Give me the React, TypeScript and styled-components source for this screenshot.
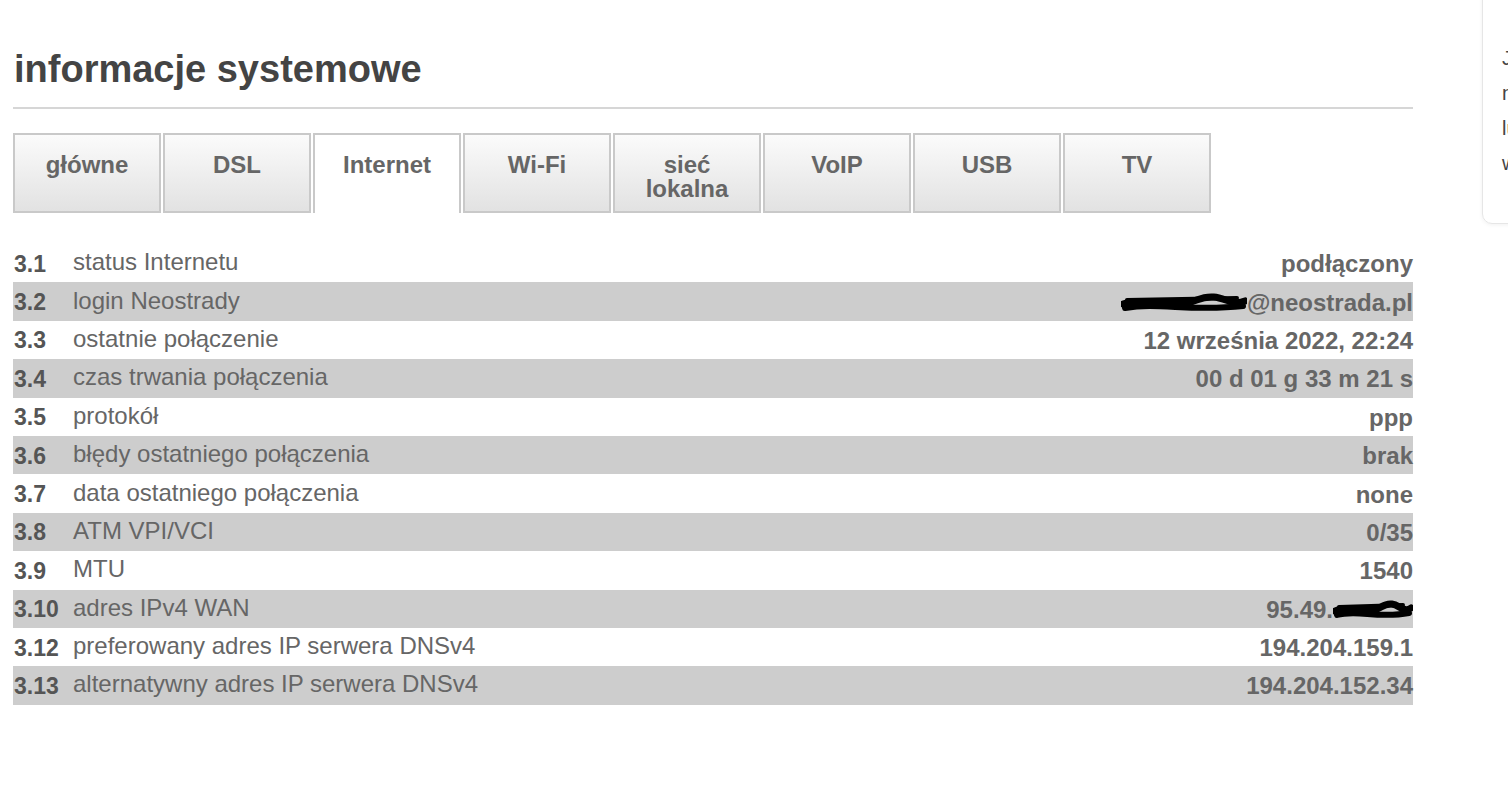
import React from 'react';
import styled, { createGlobalStyle } from 'styled-components';

const GlobalStyle = createGlobalStyle`
  html, body {
    margin: 0;
    padding: 0;
    background: #fff;
    overflow: hidden;
  }

  body {
    font-family: 'Liberation Sans', Arial, Helvetica, sans-serif;
  }
`;

type Row = {
  id: string;
  label: string;
  value: React.ReactNode;
};

const Scribble = ({ width }: { width: number }) => (
  <ScribbleSvg width={width} height={22} viewBox={`0 0 ${width} 22`}>
    <path
      d={`M2 12 C ${width * 0.2} 4, ${width * 0.4} 18, ${width * 0.6} 8 S ${width * 0.85} 16, ${width - 2} 9`}
      stroke="#000"
      strokeWidth={7}
      fill="none"
      strokeLinecap="round"
    />
    <path
      d={`M4 16 C ${width * 0.3} 10, ${width * 0.55} 20, ${width - 4} 14`}
      stroke="#000"
      strokeWidth={6}
      fill="none"
      strokeLinecap="round"
    />
    <path
      d={`M6 8 L ${width - 10} 6`}
      stroke="#000"
      strokeWidth={4}
      fill="none"
      strokeLinecap="round"
    />
  </ScribbleSvg>
);

const tabs = ['główne', 'DSL', 'Internet', 'Wi-Fi', 'sieć lokalna', 'VoIP', 'USB', 'TV'];

const rows: Row[] = [
  { id: '3.1', label: 'status Internetu', value: 'podłączony' },
  {
    id: '3.2',
    label: 'login Neostrady',
    value: (
      <>
        <Scribble width={126} />
        @neostrada.pl
      </>
    ),
  },
  { id: '3.3', label: 'ostatnie połączenie', value: '12 września 2022, 22:24' },
  { id: '3.4', label: 'czas trwania połączenia', value: '00 d 01 g 33 m 21 s' },
  { id: '3.5', label: 'protokół', value: 'ppp' },
  { id: '3.6', label: 'błędy ostatniego połączenia', value: 'brak' },
  { id: '3.7', label: 'data ostatniego połączenia', value: 'none' },
  { id: '3.8', label: 'ATM VPI/VCI', value: '0/35' },
  { id: '3.9', label: 'MTU', value: '1540' },
  {
    id: '3.10',
    label: 'adres IPv4 WAN',
    value: (
      <>
        95.49.
        <Scribble width={80} />
      </>
    ),
  },
  { id: '3.12', label: 'preferowany adres IP serwera DNSv4', value: '194.204.159.1' },
  { id: '3.13', label: 'alternatywny adres IP serwera DNSv4', value: '194.204.152.34' },
];

const App = () => {
  return (
    <>
      <GlobalStyle />
      <Page>
        <Main>
          <Title>informacje systemowe</Title>
          <Rule />
          <Tabs>
            {tabs.map((tab) => (
              <Tab key={tab} active={tab === 'Internet'}>
                {tab === 'sieć lokalna' ? (
                  <>
                    sieć
                    <br />
                    lokalna
                  </>
                ) : (
                  tab
                )}
              </Tab>
            ))}
          </Tabs>
          <Table>
            {rows.map((row, i) => (
              <TableRow key={row.id} striped={i % 2 === 1}>
                <Num>{row.id}</Num>
                <Label>{row.label}</Label>
                <Value>{row.value}</Value>
              </TableRow>
            ))}
          </Table>
        </Main>
        <Aside>
          <AsideLine>Jeśli masz pytania</AsideLine>
          <AsideLine>na temat konfiguracji</AsideLine>
          <AsideLine>lub chcesz zgłosić</AsideLine>
          <AsideLine>wystąpienie problemu</AsideLine>
        </Aside>
      </Page>
    </>
  );
};

export default App;

const Page = styled.div`
  display: flex;
  align-items: flex-start;
  width: 1508px;
  height: 796px;
  overflow: hidden;
`;

const Main = styled.div`
  flex-shrink: 0;
  width: 1400px;
  margin-left: 13px;
`;

const Title = styled.h1`
  margin: 47px 0 0 1px;
  font-size: 38px;
  line-height: 44px;
  font-weight: bold;
  color: #444;
`;

const Rule = styled.div`
  height: 2px;
  margin-top: 16px;
  background: #d6d6d6;
`;

const Tabs = styled.div`
  display: flex;
  gap: 2px;
  margin-top: 24px;
`;

const Tab = styled.div<{ active?: boolean }>`
  box-sizing: border-box;
  width: 148px;
  height: 80px;
  padding-top: 18px;
  border: 2px solid #c9c9c9;
  border-bottom: ${({ active }) => (active ? 'none' : '2px solid #c9c9c9')};
  background: ${({ active }) => (active ? '#fff' : 'linear-gradient(#fbfbfb, #e2e2e2)')};
  color: #666;
  font-size: 24px;
  line-height: 24px;
  font-weight: bold;
  text-align: center;
`;

const Table = styled.div`
  margin-top: 31px;
`;

const TableRow = styled.div<{ striped?: boolean }>`
  display: grid;
  grid-template-columns: 60px 1fr auto;
  align-items: center;
  height: 38.4px;
  padding-top: 2px;
  box-sizing: border-box;
  background: ${({ striped }) => (striped ? '#cdcdcd' : 'transparent')};
  color: #666;
`;

const Num = styled.div`
  padding-left: 1px;
  font-size: 23px;
  font-weight: bold;
  color: #555;
`;

const Label = styled.div`
  font-size: 24px;
  margin-top: -4px;
`;

const Value = styled.div`
  display: flex;
  align-items: center;
  font-size: 24px;
  font-weight: bold;
  white-space: nowrap;
`;

const ScribbleSvg = styled.svg`
  display: block;
  flex-shrink: 0;
`;

const Aside = styled.div`
  flex-shrink: 0;
  box-sizing: border-box;
  width: 300px;
  height: 244px;
  margin: -20px 0 0 69px;
  padding: 60px 0 0 19px;
  border: 1px solid #e6e6e6;
  border-radius: 10px;
  box-shadow: 0 1px 4px rgba(0, 0, 0, 0.06);
  font-family: 'Helvetica', 'Liberation Sans', Arial, sans-serif;
`;

const AsideLine = styled.div`
  font-size: 20px;
  line-height: 35px;
  color: #444;
`;
